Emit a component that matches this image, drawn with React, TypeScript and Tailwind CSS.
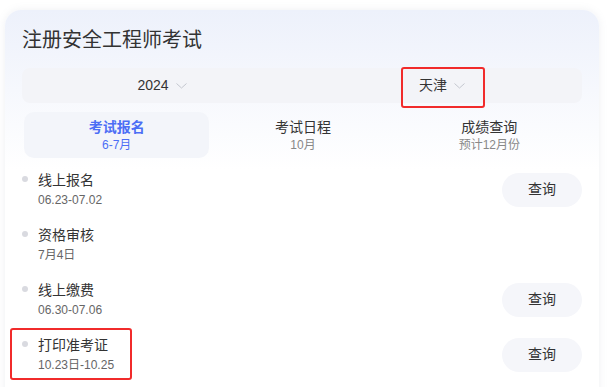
import React from "react";

const font = { fontFamily: '"Liberation Sans", "Noto Sans CJK SC", sans-serif' };

const tabs = [
  { title: "考试报名", sub: "6-7月", active: true },
  { title: "考试日程", sub: "10月", active: false },
  { title: "成绩查询", sub: "预计12月份", active: false },
];

const steps = [
  { title: "线上报名", date: "06.23-07.02", query: true },
  { title: "资格审核", date: "7月4日", query: false },
  { title: "线上缴费", date: "06.30-07.06", query: true },
  { title: "打印准考证", date: "10.23日-10.25", query: true, marked: true },
];

const Chevron = () => (
  <svg width="11" height="6" viewBox="0 0 11 6" className="ml-[7px] mt-[1px]">
    <path d="M0.5 0.5 L5.5 5 L10.5 0.5" fill="none" stroke="#c4c7cf" strokeWidth="1" />
  </svg>
);

export default function App() {
  return (
    <div className="w-[609px] h-[387px] overflow-hidden bg-white pt-[10px] pl-[5px]" style={font}>
      <div className="w-[594px] h-[400px] rounded-[16px] bg-gradient-to-b from-[#edf1fb] via-white via-40% to-white shadow-[0_0_8px_rgba(120,130,160,0.12)] px-[17px] pt-[16px]">
        <div className="text-[20px] leading-[28px] text-[#333]">注册安全工程师考试</div>

        <div className="mt-[14px] h-[35px] rounded-[8px] bg-[#f3f4f8] grid grid-cols-2">
          <div className="flex items-center justify-center text-[14px] text-[#333]">
            2024
            <Chevron />
          </div>
          <div className="relative flex items-center justify-center text-[14px] text-[#333]">
            天津
            <Chevron />
            <div className="absolute left-[99px] top-[-1px] w-[84px] h-[41px] border-2 border-[#f12b2b] rounded-[3px]" />
          </div>
        </div>

        <div className="mt-[9px] grid grid-cols-3 gap-[1px] pl-[2px]">
          {tabs.map((t) => (
            <div
              key={t.title}
              className={
                "h-[46px] rounded-[10px] flex flex-col items-center justify-center " +
                (t.active ? "bg-[#f3f5fa]" : "")
              }
            >
              <div
                className={
                  "text-[14px] leading-[20px] " +
                  (t.active ? "text-[#4c6ef5] font-bold" : "text-[#333]")
                }
              >
                {t.title}
              </div>
              <div
                className={
                  "text-[12px] leading-[16px] " + (t.active ? "text-[#4c6ef5]" : "text-[#888]")
                }
              >
                {t.sub}
              </div>
            </div>
          ))}
        </div>

        <div className="mt-[4px]">
          {steps.map((s) => (
            <div key={s.title} className="relative h-[55px] flex items-center justify-between">
              <div className="flex flex-col pl-[16px] relative">
                <span className="absolute left-0 top-[6px] w-[6px] h-[6px] rounded-full bg-[#d9dae0]" />
                <div className="text-[14px] leading-[20px] text-[#333]">{s.title}</div>
                <div className="text-[12px] leading-[18px] mt-[1px] text-[#666]">{s.date}</div>
              </div>
              {s.query && (
                <div className="w-[80px] h-[34px] rounded-full bg-[#f5f6fa] flex items-center justify-center text-[14px] text-[#333]">
                  查询
                </div>
              )}
              {s.marked && (
                <div className="absolute left-[-12px] top-[1px] w-[122px] h-[52px] border-2 border-[#f12b2b] rounded-[3px]" />
              )}
            </div>
          ))}
        </div>
      </div>
    </div>
  );
}
